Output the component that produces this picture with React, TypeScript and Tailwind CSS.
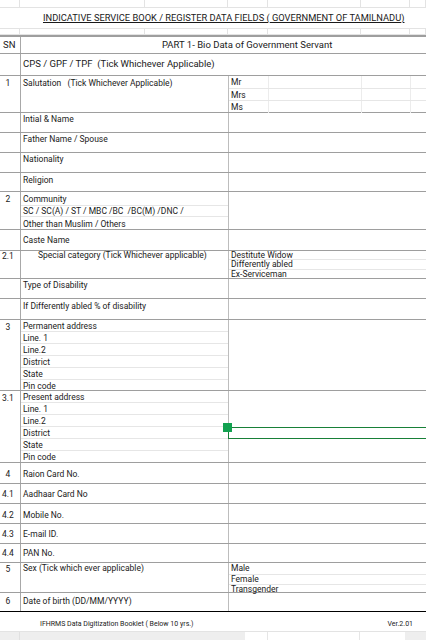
import React from 'react';

type Sub = { t?: string; h: number };

type RowDef = {
  sn?: string;
  h: number;
  pt?: number;
  label?: string;
  labels?: Sub[];
  values?: Sub[];
  indent?: boolean;
  grid?: boolean;
  tight?: boolean;
};

// widths of the spreadsheet columns behind the form
const gridCols = ['w-[20px]', 'w-[125px]', 'w-[83px]', 'w-[40px]', 'w-[93px]', 'w-[49px]', 'w-[16px]'];

const rows: RowDef[] = [
  {
    sn: '1',
    h: 37,
    pt: 2,
    label: 'Salutation   (Tick Whichever Applicable)',
    values: [
      { t: 'Mr', h: 13 },
      { t: 'Mrs', h: 12 },
      { t: 'Ms', h: 12 },
    ],
    grid: true,
  },
  { h: 20, pt: 1, label: 'Intial & Name' },
  { h: 20, pt: 1, label: 'Father Name / Spouse' },
  { h: 20, pt: 1, label: 'Nationality' },
  { h: 19, pt: 2, label: 'Religion' },
  {
    sn: '2',
    h: 38,
    labels: [
      { t: 'Community', h: 14 },
      { t: 'SC / SC(A) / ST / MBC /BC  /BC(M) /DNC /', h: 11 },
      { t: 'Other than Muslim / Others', h: 13 },
    ],
  },
  { h: 21, pt: 5, label: 'Caste Name' },
  {
    sn: '2.1',
    h: 28,
    pt: 0,
    label: 'Special category (Tick Whichever applicable)',
    indent: true,
    tight: true,
    values: [
      { t: 'Destitute Widow', h: 9 },
      { t: 'Differently abled', h: 10 },
      { t: 'Ex-Serviceman', h: 9 },
    ],
  },
  { h: 20, pt: 1, label: 'Type of Disability' },
  { h: 21, pt: 2, label: 'If Differently abled % of disability' },
  {
    sn: '3',
    h: 71,
    labels: [
      { t: 'Permanent address', h: 12 },
      { t: 'Line. 1', h: 12 },
      { t: 'Line.2', h: 12 },
      { t: 'District', h: 12 },
      { t: 'State', h: 12 },
      { t: 'Pin code', h: 11 },
    ],
  },
  {
    sn: '3.1',
    h: 72,
    labels: [
      { t: 'Present address', h: 12 },
      { t: 'Line. 1', h: 12 },
      { t: 'Line.2', h: 12 },
      { t: 'District', h: 12 },
      { t: 'State', h: 12 },
      { t: 'Pin code', h: 12 },
    ],
  },
  { sn: '4', h: 21, pt: 6, label: 'Raion Card No.' },
  { sn: '4.1', h: 20, pt: 5, label: 'Aadhaar Card No' },
  { sn: '4.2', h: 20, pt: 6, label: 'Mobile No.' },
  { sn: '4.3', h: 20, pt: 5, label: 'E-mail ID.' },
  { sn: '4.4', h: 19, pt: 4, label: 'PAN No.' },
  {
    sn: '5',
    h: 30,
    pt: 1,
    label: 'Sex (Tick which ever applicable)',
    tight: true,
    values: [
      { t: 'Male', h: 12 },
      { t: 'Female', h: 10 },
      { t: 'Transgender', h: 8 },
    ],
  },
  { sn: '6', h: 19, pt: 3, label: 'Date of birth (DD/MM/YYYY)' },
];

function GridStrip({ h }: { h: string }) {
  return (
    <div className={`flex ${h} border-b border-[#e3e3e3]`}>
      {gridCols.map((w, i) => (
        <div key={i} className={`${w} shrink-0 border-r border-[#e3e3e3]`} />
      ))}
    </div>
  );
}

function FormRow({ row, last }: { row: RowDef; last: boolean }) {
  const lh = row.tight ? 'leading-[9px]' : 'leading-[10px]';
  return (
    <div
      className={`flex shrink-0 border-b ${last ? 'border-black' : 'border-[#9e9e9e]'}`}
      style={{ height: row.h }}
    >
      <div
        className="w-[21px] shrink-0 border-r border-[#a8a8a8] text-center pr-[4px] text-[8.5px] leading-[10px]"
        style={{ paddingTop: row.labels ? 2 : row.pt ?? 0 }}
      >
        {row.sn}
      </div>
      <div className="w-[208px] shrink-0 border-r border-[#bdbdbd] flex flex-col">
        {row.labels ? (
          row.labels.map((s, i) => (
            <div
              key={i}
              className={`shrink-0 pl-[2px] flex items-center whitespace-pre text-[8.5px] leading-[10px] ${
                i < row.labels!.length - 1 ? 'border-b border-[#e6e6e6]' : ''
              }`}
              style={{ height: s.h }}
            >
              {s.t}
            </div>
          ))
        ) : (
          <div
            className={`whitespace-pre text-[8.5px] ${lh} ${row.indent ? 'pl-[17px]' : 'pl-[2px]'}`}
            style={{ paddingTop: row.pt ?? 0 }}
          >
            {row.label}
          </div>
        )}
      </div>
      <div className="flex-1 flex flex-col">
        {row.values?.map((s, i) => (
          <div
            key={i}
            className={`shrink-0 flex ${i < row.values!.length - 1 ? 'border-b border-[#e6e6e6]' : ''}`}
            style={{ height: s.h }}
          >
            <div
              className={`pl-[2px] flex items-center whitespace-nowrap text-[8.5px] ${lh} ${
                row.grid ? 'w-[40px] border-r border-[#ececec]' : 'flex-1'
              }`}
            >
              {s.t}
            </div>
            {row.grid && (
              <>
                <div className="w-[93px] border-r border-[#ececec]" />
                <div className="w-[49px] border-r border-[#ececec]" />
              </>
            )}
          </div>
        ))}
      </div>
    </div>
  );
}

export default function App() {
  return (
    <div className="relative w-[426px] h-[640px] overflow-hidden bg-white text-[#1a1a1a] font-['Roboto','Liberation_Sans',sans-serif]">
      {/* sheet rows above the form */}
      <GridStrip h="h-[8px]" />
      <div className="h-[21px] flex items-center border-b border-[#e3e3e3] pl-[43px] text-[9.3px] whitespace-nowrap">
        <span className="underline underline-offset-[1px]">
          INDICATIVE SERVICE BOOK / REGISTER DATA FIELDS ( GOVERNMENT OF TAMILNADU)
        </span>
      </div>
      <GridStrip h="h-[6px]" />

      {/* form table */}
      <div className="border-t-2 border-[#9e9e9e] flex flex-col">
        <div className="flex h-[17px] border-b border-[#9e9e9e]">
          <div className="w-[21px] shrink-0 border-r border-[#a8a8a8] pl-[3px] flex items-center text-[9.5px]">SN</div>
          <div className="flex-1 flex items-center pl-[141px] text-[9.5px] whitespace-nowrap">
            PART 1- Bio Data of Government Servant
          </div>
        </div>
        <div className="flex h-[22px] border-b border-[#9e9e9e]">
          <div className="w-[21px] shrink-0 border-r border-[#a8a8a8]" />
          <div className="flex-1 pl-[2px] flex items-center text-[9.5px] whitespace-pre">
            CPS / GPF / TPF  (Tick Whichever Applicable)
          </div>
        </div>
        {rows.map((r, i) => (
          <FormRow key={i} row={r} last={i === rows.length - 1} />
        ))}
      </div>

      {/* footer */}
      <div className="h-[20px] flex items-center justify-between pt-[6px] pl-[40px] pr-[13px] text-[7px] border-b border-[#e3e3e3]">
        <span>IFHRMS Data Digitization Booklet ( Below 10 yrs.)</span>
        <span>Ver.2.01</span>
      </div>
      <div className="flex h-[10px]">
        <div className="w-[20px] bg-[#eeeeee] border-r border-[#e0e0e0]" />
        <div className="w-[225px] bg-[#eeeeee]" />
        <div className="w-[23px] bg-white border-r border-[#e6e6e6]" />
        <div className="w-[92px] bg-white border-r border-[#e6e6e6]" />
        <div className="w-[45px] bg-white" />
        <div className="flex-1 bg-[#eeeeee]" />
      </div>

      {/* cell selection */}
      <div className="absolute left-[228px] top-[427px] w-[200px] h-[12px] border-l border-t border-b border-[#188038]" />
      <div className="absolute left-[223px] top-[423px] w-[9px] h-[9px] bg-[#12a150]" />
    </div>
  );
}
